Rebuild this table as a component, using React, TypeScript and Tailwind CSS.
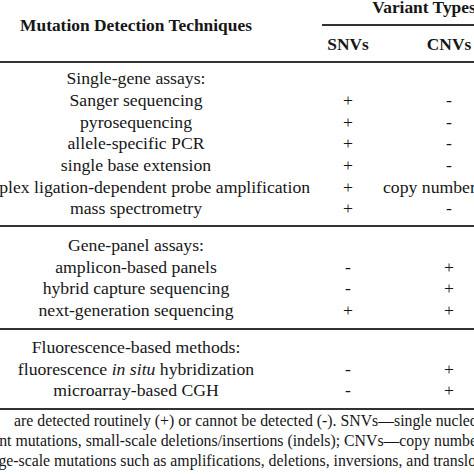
const serif = { fontFamily: '"Liberation Serif", "Times New Roman", serif' };

type Row = { name: React.ReactNode; snv?: string; cnv?: React.ReactNode };

const singleGene: Row[] = [
  { name: "Single-gene assays:" },
  { name: "Sanger sequencing", snv: "+", cnv: "-" },
  { name: "pyrosequencing", snv: "+", cnv: "-" },
  { name: "allele-specific PCR", snv: "+", cnv: "-" },
  { name: "single base extension", snv: "+", cnv: "-" },
  {
    name: "multiplex ligation-dependent probe amplification",
    snv: "+",
    cnv: <span className="block text-left pl-[9px]">copy number</span>,
  },
  { name: "mass spectrometry", snv: "+", cnv: "-" },
];

const genePanel: Row[] = [
  { name: "Gene-panel assays:" },
  { name: "amplicon-based panels", snv: "-", cnv: "+" },
  { name: "hybrid capture sequencing", snv: "-", cnv: "+" },
  { name: "next-generation sequencing", snv: "+", cnv: "+" },
];

const fluorescence: Row[] = [
  { name: "Fluorescence-based methods:" },
  {
    name: (
      <>
        fluorescence <i>in situ</i> hybridization
      </>
    ),
    snv: "-",
    cnv: "+",
  },
  { name: "microarray-based CGH", snv: "-", cnv: "+" },
];

function Rule() {
  return <div className="h-[1.5px] bg-[#333]" />;
}

function Section({ rows, className }: { rows: Row[]; className: string }) {
  return (
    <div className={className}>
      {rows.map((r, i) => (
        <div key={i} className="flex h-[21.7px] leading-[21.7px] text-[17.7px]">
          <div className="w-[372px] text-center whitespace-nowrap">{r.name}</div>
          <div className="w-[52px] text-center">{r.snv}</div>
          <div className="w-[150px] text-center whitespace-nowrap">{r.cnv}</div>
        </div>
      ))}
    </div>
  );
}

export default function App() {
  return (
    <div className="w-[474px] h-[474px] overflow-hidden bg-white text-[#161616]" style={serif}>
      <div className="w-[574px] ml-[-50px]">
        {/* header */}
        <div className="flex h-[61px] font-bold text-[17.4px]">
          <div className="w-[372px] text-center pt-[15px] leading-[20px]">
            Mutation Detection Techniques
          </div>
          <div className="w-[202px] flex flex-col">
            <div className="h-[24px] leading-[14px] text-center pl-[2px]">Variant Types</div>
            <Rule />
            <div className="flex pt-[8.5px] leading-[20px]">
              <div className="w-[52px] text-center">SNVs</div>
              <div className="w-[150px] text-center">CNVs</div>
            </div>
          </div>
        </div>
        <Rule />
        <Section rows={singleGene} className="pt-[5.7px] pb-[5.4px]" />
        <Rule />
        <Section rows={genePanel} className="pt-[8.2px] pb-[6.5px]" />
        <Rule />
        <Section rows={fluorescence} className="pt-[7.2px] pb-[6.2px]" />
        <Rule />
      </div>
      {/* caption */}
      <div className="pt-[1.7px] text-[15.8px] leading-[20px] whitespace-nowrap">
        <div className="pl-[14px]">
          are detected routinely (+) or cannot be detected (-). SNVs—single nucleotide variants:
        </div>
        <div className="ml-[-21px]">
          point mutations, small-scale deletions/insertions (indels); CNVs—copy number variants:
        </div>
        <div className="ml-[-18px]">
          large-scale mutations such as amplifications, deletions, inversions, and translocations.
        </div>
      </div>
    </div>
  );
}
